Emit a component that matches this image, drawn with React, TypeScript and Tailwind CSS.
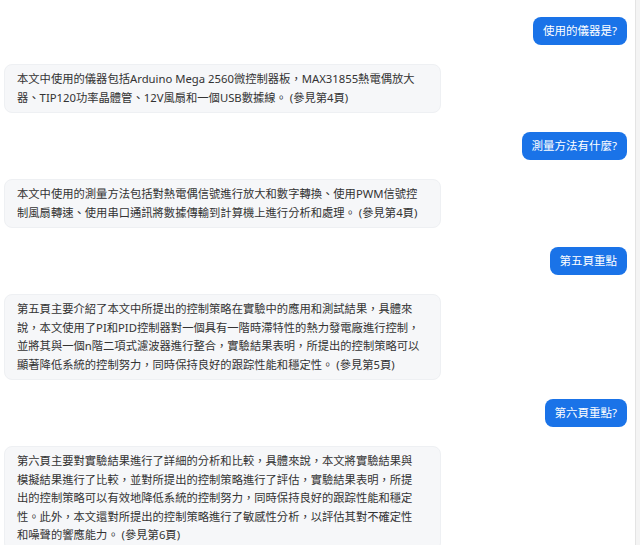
const font = "font-['Segoe_UI','Noto_Sans','Noto_Sans_CJK_TC',sans-serif]";

type Msg = { from: 'user' | 'bot'; lines: string[] };

const messages: Msg[] = [
  { from: 'user', lines: ['使用的儀器是?'] },
  {
    from: 'bot',
    lines: [
      '本文中使用的儀器包括Arduino Mega 2560微控制器板，MAX31855熱電偶放大',
      '器、TIP120功率晶體管、12V風扇和一個USB數據線。 (參見第4頁)',
    ],
  },
  { from: 'user', lines: ['測量方法有什麼?'] },
  {
    from: 'bot',
    lines: [
      '本文中使用的測量方法包括對熱電偶信號進行放大和數字轉換、使用PWM信號控',
      '制風扇轉速、使用串口通訊將數據傳輸到計算機上進行分析和處理。 (參見第4頁)',
    ],
  },
  { from: 'user', lines: ['第五頁重點'] },
  {
    from: 'bot',
    lines: [
      '第五頁主要介紹了本文中所提出的控制策略在實驗中的應用和測試結果，具體來',
      '說，本文使用了PI和PID控制器對一個具有一階時滯特性的熱力發電廠進行控制，',
      '並將其與一個n階二項式濾波器進行整合，實驗結果表明，所提出的控制策略可以',
      '顯著降低系統的控制努力，同時保持良好的跟踪性能和穩定性。 (參見第5頁)',
    ],
  },
  { from: 'user', lines: ['第六頁重點?'] },
  {
    from: 'bot',
    lines: [
      '第六頁主要對實驗結果進行了詳細的分析和比較，具體來說，本文將實驗結果與',
      '模擬結果進行了比較，並對所提出的控制策略進行了評估，實驗結果表明，所提',
      '出的控制策略可以有效地降低系統的控制努力，同時保持良好的跟踪性能和穩定',
      '性。此外，本文還對所提出的控制策略進行了敏感性分析，以評估其對不確定性',
      '和噪聲的響應能力。 (參見第6頁)',
    ],
  },
];

function Bubble({ msg }: { msg: Msg }) {
  if (msg.from === 'user') {
    return (
      <div className="flex justify-end">
        <div className="rounded-lg bg-[#1a73e8] px-[10px] py-[5px] text-[11.5px] leading-[18px] text-white whitespace-nowrap">
          {msg.lines[0]}
        </div>
      </div>
    );
  }
  return (
    <div className="flex justify-start">
      <div className="w-[437px] rounded-lg bg-[#f6f7f9] border border-[#eef0f3] px-3 py-[5px] text-[11.3px] leading-[18.5px] text-[#333]">
        {msg.lines.map((l, i) => (
          <div key={i} className="whitespace-nowrap">
            {l}
          </div>
        ))}
      </div>
    </div>
  );
}

export default function App() {
  return (
    <div lang="zh-TW" className={`${font} flex h-[545px] w-[640px] overflow-hidden bg-white`}>
      <div className="flex flex-1 flex-col gap-[19px] pl-1 pr-2 pt-[17px]">
        {messages.map((m, i) => (
          <Bubble key={i} msg={m} />
        ))}
      </div>
      <div className="w-[5px] shrink-0 border-l border-[#e4e4e4] bg-[#f4f4f4]" />
    </div>
  );
}
